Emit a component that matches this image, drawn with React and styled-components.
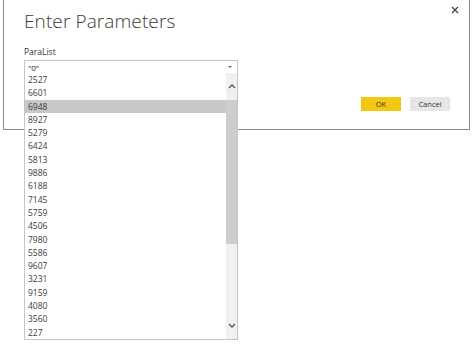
import React from "react";
import styled, { createGlobalStyle } from "styled-components";

const Global = createGlobalStyle`
  html, body { margin: 0; padding: 0; background: #fff; }
  body { font-family: "Open Sans", "Liberation Sans", sans-serif; color: #333; }
`;

const Page = styled.div`
  width: 474px;
  height: 346px;
  position: relative;
  overflow: hidden;
`;

const Dialog = styled.div`
  margin-left: 3px;
  width: 465px;
  height: 129px;
  border: 1px solid #8c8c8c;
  border-top: none;
  position: relative;
  box-sizing: content-box;
`;

const Close = styled.div`
  position: absolute;
  top: 4px;
  right: 8px;
  width: 12px;
  height: 12px;
  display: flex;
  align-items: center;
  justify-content: center;
`;

const Title = styled.h1`
  margin: 0;
  padding: 9px 0 0 20px;
  font-size: 19px;
  font-weight: 300;
  color: #3a3a3a;
  line-height: 24px;
  letter-spacing: 0.1px;
`;

const Field = styled.div`
  margin: 14px 0 0 20px;
  width: 214px;
  position: relative;
`;

const Label = styled.div`
  font-size: 8.5px;
  line-height: 10px;
  color: #333;
  margin-bottom: 3px;
`;

const Select = styled.div`
  height: 12px;
  border: 1px solid #c6c6c6;
  display: flex;
  align-items: center;
  justify-content: space-between;
  padding: 0 5px 0 3px;
  font-size: 8px;
  color: #222;
`;

const Caret = styled.span`
  width: 0;
  height: 0;
  border-left: 2px solid transparent;
  border-right: 2px solid transparent;
  border-top: 2px solid #666;
`;

const List = styled.div`
  position: absolute;
  top: 26px;
  left: 0;
  width: 212px;
  height: 266px;
  border: 1px solid #c6c6c6;
  border-top: none;
  background: #fff;
  display: flex;
  z-index: 5;
`;

const Items = styled.div`
  flex: 1;
  display: flex;
  flex-direction: column;
`;

const Item = styled.div`
  height: 13.3px;
  line-height: 13.3px;
  padding-left: 3px;
  font-size: 8.5px;
  color: #3a3a3a;
  background: ${(p) => (p.$active ? "#c8c8c8" : "transparent")};
`;

const Scrollbar = styled.div`
  width: 11px;
  background: #f0f0f0;
  display: flex;
  flex-direction: column;
  align-items: stretch;
`;

const Arrow = styled.div`
  height: ${(p) => p.$h}px;
  display: flex;
  align-items: ${(p) => (p.$down ? "flex-end" : "flex-start")};
  justify-content: center;
  padding: ${(p) => (p.$down ? "0 0 11px" : "11px 0 0")};
  box-sizing: border-box;
`;

const Thumb = styled.div`
  height: 144px;
  background: #cdcdcd;
`;

const Track = styled.div`
  flex: 1;
`;

const Buttons = styled.div`
  position: absolute;
  right: 19px;
  top: 97px;
  display: flex;
  gap: 9px;
`;

const Button = styled.button`
  width: 40px;
  height: 14px;
  border: none;
  padding: 0;
  font-family: inherit;
  font-size: 7.5px;
  color: #333;
  background: ${(p) => (p.$primary ? "#f2c811" : "#e6e6e6")};
`;

const values = [
  "2527", "6601", "6948", "8927", "5279", "6424", "5813", "9886", "6188", "7145",
  "5759", "4506", "7980", "5586", "9607", "3231", "9159", "4080", "3560", "227",
];

const Chevron = ({ down }) => (
  <svg width="8" height="5" viewBox="0 0 8 5">
    <path
      d={down ? "M1 1 L4 4 L7 1" : "M1 4 L4 1 L7 4"}
      fill="none"
      stroke="#555"
      strokeWidth="1.3"
    />
  </svg>
);

export default function App() {
  return (
    <Page>
      <Global />
      <Dialog>
        <Close>
          <svg width="8" height="8" viewBox="0 0 8 8">
            <path d="M1 1 L7 7 M7 1 L1 7" stroke="#444" strokeWidth="1.3" />
          </svg>
        </Close>
        <Title>Enter Parameters</Title>
        <Field>
          <Label>ParaList</Label>
          <Select>
            <span>"0"</span>
            <Caret />
          </Select>
          <List>
            <Items>
              {values.map((v) => (
                <Item key={v} $active={v === "6948"}>
                  {v}
                </Item>
              ))}
            </Items>
            <Scrollbar>
              <Arrow $h={27}>
                <Chevron />
              </Arrow>
              <Thumb />
              <Track />
              <Arrow $h={27} $down>
                <Chevron down />
              </Arrow>
            </Scrollbar>
          </List>
        </Field>
        <Buttons>
          <Button $primary>OK</Button>
          <Button>Cancel</Button>
        </Buttons>
      </Dialog>
    </Page>
  );
}
